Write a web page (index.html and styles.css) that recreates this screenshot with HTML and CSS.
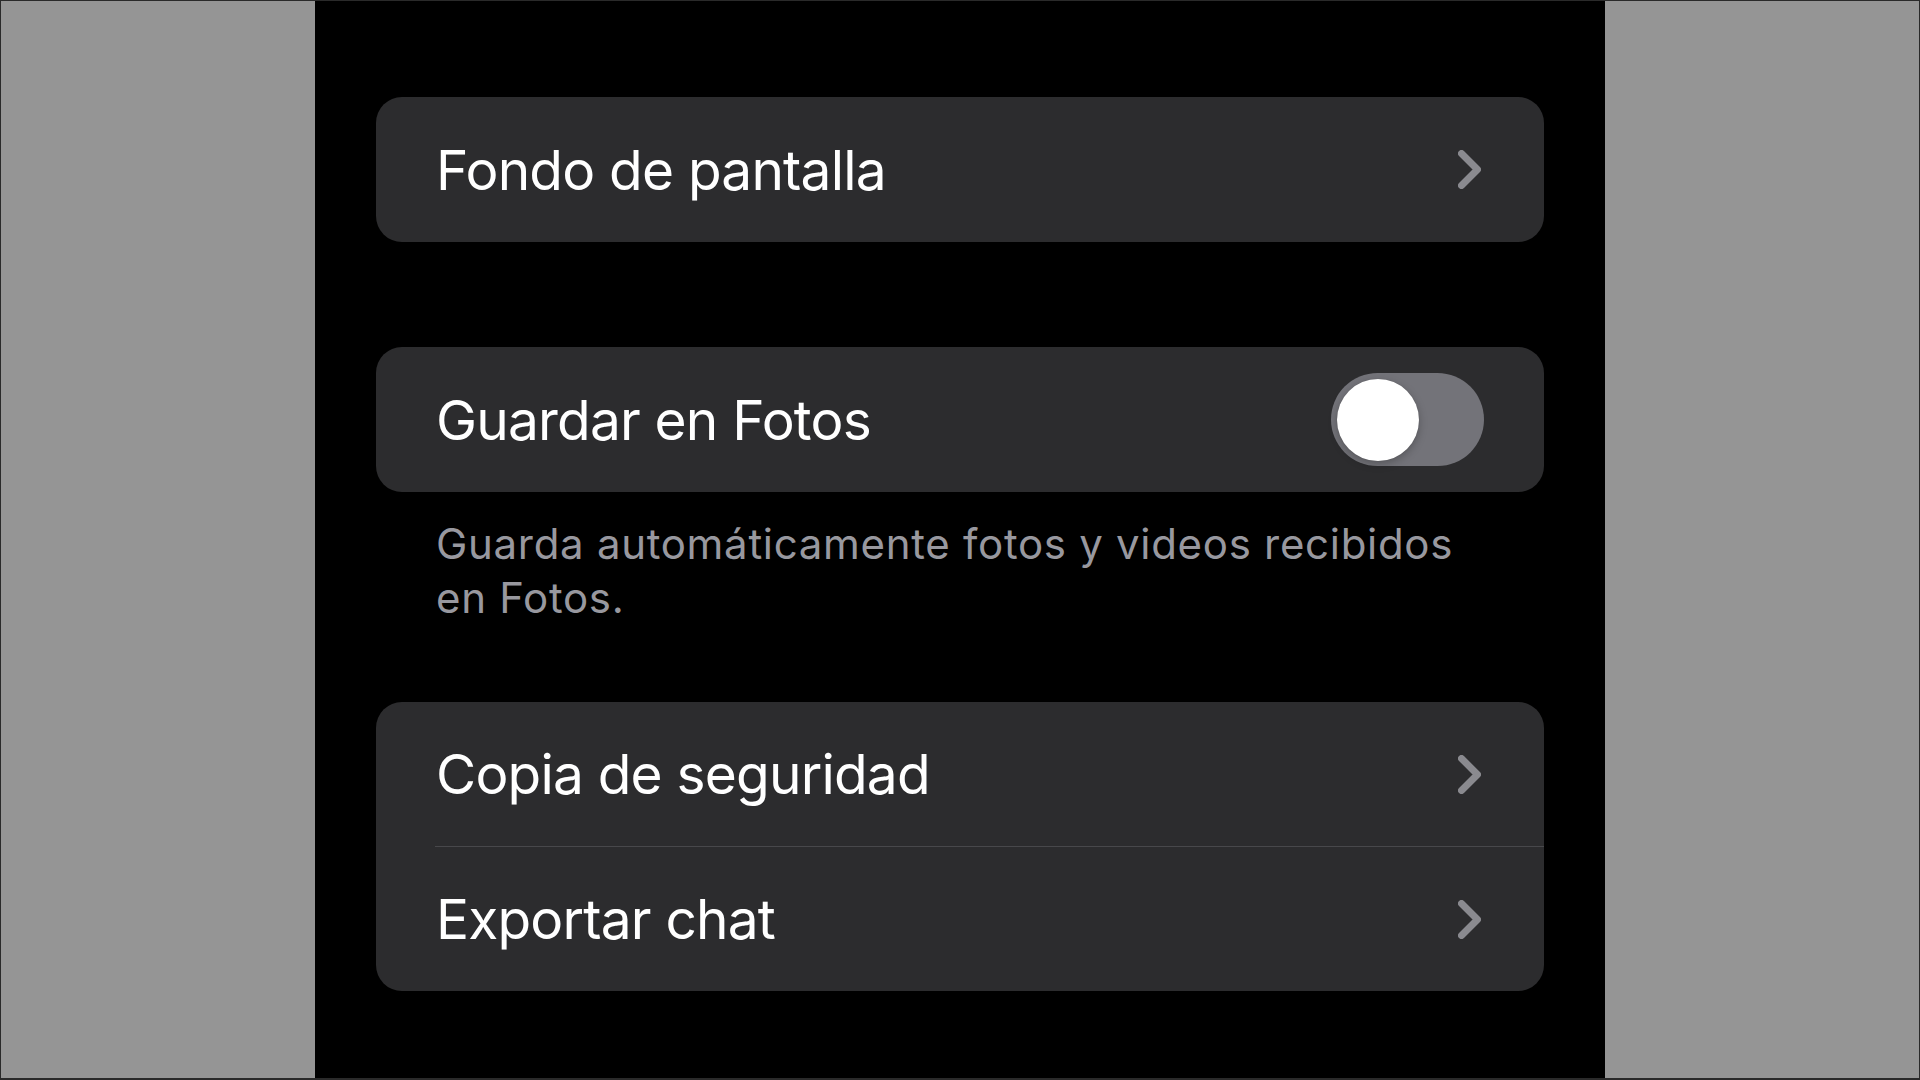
FILE: index.html
```html
<!DOCTYPE html>
<html lang="es">
<head>
<meta charset="utf-8">
<title>Ajustes del chat</title>
<link rel="stylesheet" href="styles.css">
</head>
<body>
<div class="frame">
  <main class="panel">
    <section class="card">
      <div class="row">
        <span class="label">Fondo de pantalla</span>
        <svg class="chevron" viewBox="0 0 23 39" width="23" height="39"><path d="M3.5 3.5 L19.5 19.5 L3.5 35.5" fill="none" stroke="currentColor" stroke-width="7" stroke-linecap="round" stroke-linejoin="round"/></svg>
      </div>
    </section>

    <section class="card card-gap">
      <div class="row">
        <span class="label">Guardar en Fotos</span>
        <span class="toggle"><span class="knob"></span></span>
      </div>
    </section>
    <p class="footer">Guarda automáticamente fotos y videos recibidos<br>en Fotos.</p>

    <section class="card card-last">
      <div class="row">
        <span class="label">Copia de seguridad</span>
        <svg class="chevron" viewBox="0 0 23 39" width="23" height="39"><path d="M3.5 3.5 L19.5 19.5 L3.5 35.5" fill="none" stroke="currentColor" stroke-width="7" stroke-linecap="round" stroke-linejoin="round"/></svg>
      </div>
      <div class="divider"></div>
      <div class="row">
        <span class="label">Exportar chat</span>
        <svg class="chevron" viewBox="0 0 23 39" width="23" height="39"><path d="M3.5 3.5 L19.5 19.5 L3.5 35.5" fill="none" stroke="currentColor" stroke-width="7" stroke-linecap="round" stroke-linejoin="round"/></svg>
      </div>
    </section>
  </main>
</div>
</body>
</html>
```

FILE: styles.css
```css
* { box-sizing: border-box; }

html, body {
  margin: 0;
  padding: 0;
  width: 1920px;
  height: 1080px;
  overflow: hidden;
  background: #959595;
}

.frame {
  width: 1920px;
  height: 1080px;
  display: flex;
  justify-content: center;
  border-bottom: 2px solid #2a2a2a;
  border-right: 1px solid #2a2a2a;
  border-left: 1px solid #2a2a2a;
  border-top: 1px solid #2a2a2a;
}

.panel {
  width: 1290px;
  height: 100%;
  background: #000;
  padding: 96px 61px 0 61px;
  font-family: Inter, "Noto Sans", "Liberation Sans", sans-serif;
}

.card {
  background: #2c2c2e;
  border-radius: 26px;
  overflow: hidden;
}

.card-gap { margin-top: 105px; }
.card-last { margin-top: 77px; }

.row {
  height: 145px;
  display: flex;
  align-items: center;
  justify-content: space-between;
  padding: 0 61px 0 60px;
}

.card-last .row { height: 144px; }

.label {
  color: #ffffff;
  font-size: 55px;
  letter-spacing: -0.8px;
  white-space: nowrap;
}

.chevron {
  color: #8a8a8f;
  display: block;
  margin-right: 2px;
}

.toggle {
  width: 153px;
  height: 93px;
  border-radius: 47px;
  background: #737379;
  display: flex;
  align-items: center;
  padding-left: 6px;
  margin-right: -1px;
}

.knob {
  width: 82px;
  height: 82px;
  border-radius: 50%;
  background: #fff;
  box-shadow: 0 3px 8px rgba(0,0,0,0.25), 0 0 1px rgba(0,0,0,0.2);
}

.footer {
  margin: 25px 0 0 0;
  padding-left: 60px;
  color: #98989f;
  font-size: 42px;
  line-height: 54px;
  letter-spacing: 0.7px;
}

.divider {
  height: 1px;
  background: #48484b;
  margin-left: 59px;
}
```
